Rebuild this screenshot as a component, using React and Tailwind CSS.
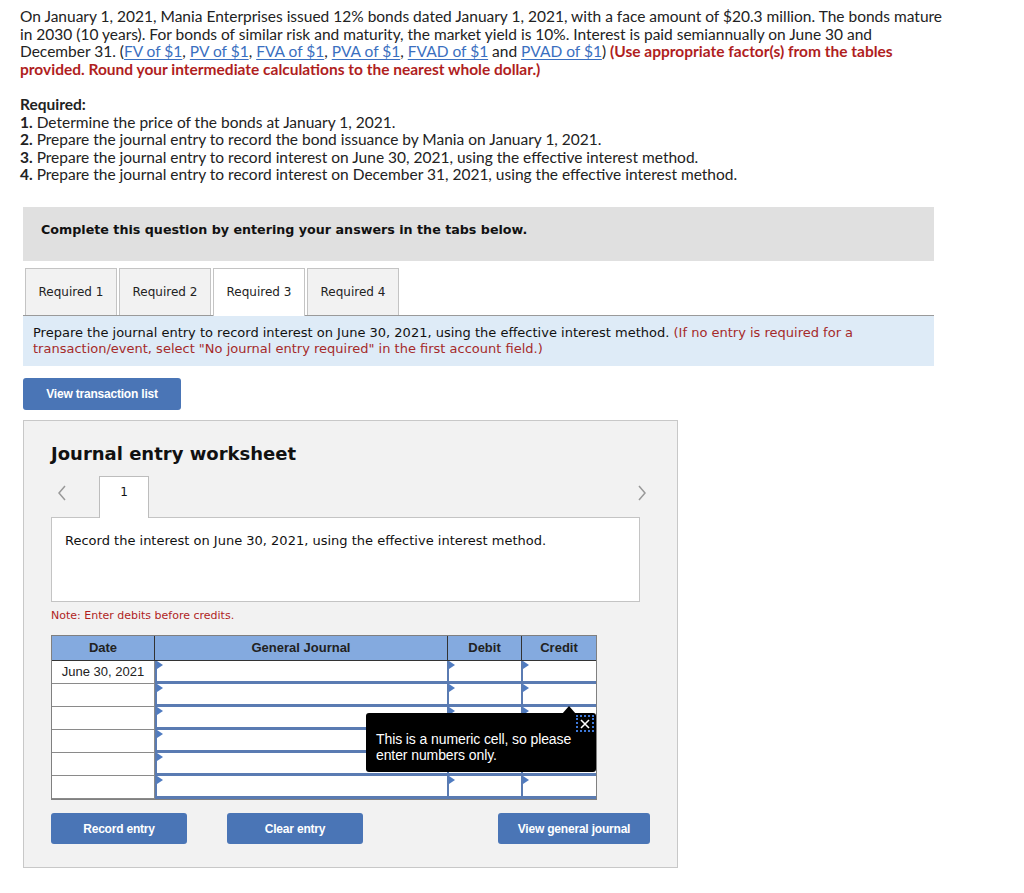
import React from "react";

const sans = { fontFamily: "Lato, 'Open Sans', sans-serif" };
const verdana = { fontFamily: "'DejaVu Sans', Verdana, sans-serif" };
const arial = { fontFamily: "'Liberation Sans', Arial, sans-serif" };

function Tri() {
  return (
    <svg className="absolute left-0 top-0" width="6" height="8" viewBox="0 0 6 8">
      <polygon points="0,0 6,4 0,8" fill="#4f7bc0" />
    </svg>
  );
}

function InputCell({ w }) {
  return (
    <div className="relative bg-white border-l-2 border-b-[3px] border-[#5a7bb2]" style={{ width: w }}>
      <Tri />
    </div>
  );
}

function Row({ date }) {
  return (
    <div className="flex h-[23px]">
      <div
        className="w-[103px] border-r border-b border-[#8a8a8a] bg-white flex items-center justify-center text-[13px] text-[#222]"
        style={arial}
      >
        {date}
      </div>
      <InputCell w={293} />
      <InputCell w={74} />
      <InputCell w={75} />
    </div>
  );
}

function Btn({ children, className }) {
  return (
    <div
      className={`bg-[#4a75b6] text-white font-bold text-[12px] tracking-[-0.2px] rounded-[3px] flex items-center justify-center ${className}`}
      style={arial}
    >
      {children}
    </div>
  );
}

const Link = ({ children }) => (
  <span className="text-[#3a6fc0] underline underline-offset-2">{children}</span>
);

export default function App() {
  return (
    <div className="w-[1024px] min-h-[893px] bg-white">
      <div className="pl-5 pt-[8px] text-[15.5px] leading-[17.5px] text-[#222]" style={sans}>
        <p>
          On January 1, 2021, Mania Enterprises issued 12% bonds dated January 1, 2021, with a face amount of $20.3 million. The bonds mature
          <br />
          in 2030 (10 years). For bonds of similar risk and maturity, the market yield is 10%. Interest is paid semiannually on June 30 and
          <br />
          December 31. (<Link>FV of $1</Link>, <Link>PV of $1</Link>, <Link>FVA of $1</Link>, <Link>PVA of $1</Link>,{" "}
          <Link>FVAD of $1</Link> and <Link>PVAD of $1</Link>){" "}
          <b className="text-[#b01e1e]">(Use appropriate factor(s) from the tables</b>
          <br />
          <b className="text-[#b01e1e]">provided. Round your intermediate calculations to the nearest whole dollar.)</b>
        </p>
        <div className="mt-[18px]">
          <p className="font-bold">Required:</p>
          <p><b>1.</b> Determine the price of the bonds at January 1, 2021.</p>
          <p><b>2.</b> Prepare the journal entry to record the bond issuance by Mania on January 1, 2021.</p>
          <p><b>3.</b> Prepare the journal entry to record interest on June 30, 2021, using the effective interest method.</p>
          <p><b>4.</b> Prepare the journal entry to record interest on December 31, 2021, using the effective interest method.</p>
        </div>
      </div>

      <div className="ml-[23px] w-[911px]" style={verdana}>
        <div className="mt-[23px] h-[54px] bg-[#e0e0e0] pl-[18px] pt-[15px] leading-[16px] text-[12.7px] font-bold text-[#111]">
          Complete this question by entering your answers in the tabs below.
        </div>
        <div className="mt-[7px] flex gap-[2px] pl-[2px] h-[47px]">
          {["Required 1", "Required 2", "Required 3", "Required 4"].map((t, i) => (
            <div
              key={t}
              className={`w-[92px] flex items-center justify-center text-[12px] text-[#222] border border-[#c4c4c4] ${
                i === 2 ? "bg-white border-[#999] border-b-0 h-[48px] relative z-10" : "bg-[#f2f2f2] border-b-0"
              }`}
            >
              {t}
            </div>
          ))}
        </div>
        <div className="h-[51px] bg-[#deebf7] border-t border-[#9a9a9a] pl-[10px] pt-[9px] text-[13px] leading-[16px] text-[#111]">
          Prepare the journal entry to record interest on June 30, 2021, using the effective interest method.{" "}
          <span className="text-[#a52a2a]">(If no entry is required for a</span>
          <br />
          <span className="text-[#a52a2a]">transaction/event, select "No journal entry required" in the first account field.)</span>
        </div>

        <Btn className="mt-[12px] w-[158px] h-[32px]">View transaction list</Btn>

        <div className="mt-[10px] w-[655px] h-[448px] bg-[#f2f2f2] border border-[#c8c8c8] pl-[27px] pt-[19px]">
          <div className="text-[18px] font-bold text-[#111]">Journal entry worksheet</div>
          <div className="mt-[10px] flex items-end h-[41px] relative">
            <svg className="absolute left-[6px] top-[8px]" width="10" height="16" viewBox="0 0 10 16">
              <polyline points="8,1 2,8 8,15" fill="none" stroke="#999" strokeWidth="1.5" />
            </svg>
            <div className="ml-[48px] w-[50px] h-[42px] bg-white border border-[#bdbdbd] border-b-0 flex items-start justify-center pt-[6px] text-[12px] text-[#111] relative z-10">
              1
            </div>
            <svg className="absolute left-[586px] top-[8px]" width="10" height="16" viewBox="0 0 10 16">
              <polyline points="2,1 8,8 2,15" fill="none" stroke="#999" strokeWidth="1.5" />
            </svg>
          </div>
          <div className="w-[589px] h-[85px] bg-white border border-[#c4c4c4] -mt-px pl-[13px] pt-[13px] text-[13px] text-[#111]">
            Record the interest on June 30, 2021, using the effective interest method.
          </div>
          <div className="mt-[6px] text-[11px] text-[#b01e1e]">Note: Enter debits before credits.</div>

          <div className="mt-[11px] relative w-[546px]" style={arial}>
            <div className="border border-[#808080]">
              <div className="flex h-[25px] bg-[#84aadf] text-[13px] font-bold text-[#222] border-b border-[#333]">
                <div className="w-[103px] border-r border-[#333] flex items-center justify-center">Date</div>
                <div className="w-[293px] border-r border-[#333] flex items-center justify-center">General Journal</div>
                <div className="w-[74px] border-r border-[#333] flex items-center justify-center">Debit</div>
                <div className="w-[74px] flex items-center justify-center">Credit</div>
              </div>
              <Row date="June 30, 2021" />
              <Row date="" />
              <Row date="" />
              <Row date="" />
              <Row date="" />
              <Row date="" />
            </div>

            <div className="absolute left-[315px] top-[78px] w-[230px] h-[59px] bg-black rounded-[3px] text-white text-[14px] tracking-[-0.1px] leading-[16px] pl-[10px] pt-[18px]">
              <svg className="absolute right-[20px] -top-[7px]" width="14" height="8" viewBox="0 0 14 8">
                <polygon points="0,8 7,0 14,8" fill="#000" />
              </svg>
              <div className="absolute right-[2px] top-[2px] w-[18px] h-[17px] border-2 border-dotted border-[#3d78d8] flex items-center justify-center">
                <svg width="10" height="10" viewBox="0 0 10 10">
                  <path d="M1,1 L9,9 M9,1 L1,9" stroke="#fff" strokeWidth="1.6" />
                </svg>
              </div>
              This is a numeric cell, so please
              <br />
              enter numbers only.
            </div>
          </div>

          <div className="mt-[13px] flex">
            <Btn className="w-[136px] h-[31px]">Record entry</Btn>
            <Btn className="ml-[40px] w-[136px] h-[31px]">Clear entry</Btn>
            <Btn className="ml-[135px] w-[152px] h-[31px]">View general journal</Btn>
          </div>
        </div>
      </div>
    </div>
  );
}
